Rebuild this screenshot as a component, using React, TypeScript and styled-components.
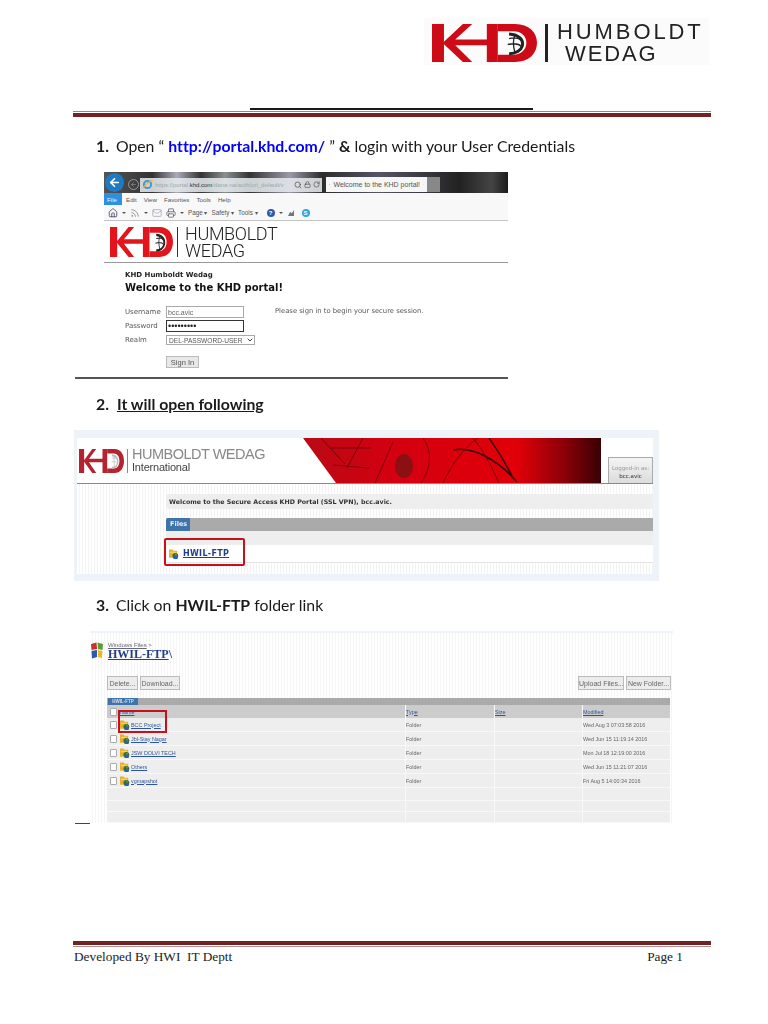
import { FC, ReactNode } from 'react';
import styled, { createGlobalStyle } from 'styled-components';
import { ArrowRight, ChevronDown, Home, Lock, Mail, Printer, RotateCw, Rss, Search, X } from 'lucide-react';

const GlobalStyle = createGlobalStyle`
  * {
    box-sizing: border-box;
  }

  body {
    margin: 0;
    background: #fff;
    color: #111;
    font-family: 'Lato', 'Liberation Sans', sans-serif;
    font-variant-ligatures: none;
  }
`;

interface IKhdMarkProps {
  width: number;
  height: number;
  color: string;
  inner?: string;
}

// KHD letter mark, stretched by each logo size
const KhdMark: FC<IKhdMarkProps> = ({ width, height, color, inner = '#222' }) => (
  <svg width={width} height={height} viewBox="0 0 316 115" preserveAspectRatio="none">
    <path
      fill={color}
      d="M0 0H36V115H0ZM36 54L93 0H121L70 47H165V0H198V115H165V64H70L121 115H93L36 61Z"
    />
    <path
      fill={color}
      d="M198 0H250C292 0 316 25 316 57C316 90 292 115 250 115H198V93H245C268 93 284 78 284 57C284 36 268 22 245 22H198Z"
    />
    <g fill="none" stroke={inner} strokeWidth="4">
      <path d="M232 30C262 32 276 48 272 66C268 80 252 90 232 90" strokeWidth="9" />
      <path d="M232 44C250 40 264 44 270 52M228 62C246 58 262 60 270 68M250 30C244 46 244 68 250 86" />
    </g>
  </svg>
);

const HeaderLogo = () => (
  <LogoPanel>
    <KhdMark width={105} height={38} color="#cc0b16" />
    <LogoDivider />
    <LogoName>
      <span>HUMBOLDT</span>
      <span>WEDAG</span>
    </LogoName>
  </LogoPanel>
);

const PortalLogo = () => (
  <PortalLogoRow>
    <KhdMark width={63} height={30} color="#e2141c" />
    <PortalLogoDivider />
    <PortalLogoName>
      <span>HUMBOLDT</span>
      <span>WEDAG</span>
    </PortalLogoName>
  </PortalLogoRow>
);

const FolderIcon = () => (
  <svg width="10" height="12" viewBox="0 0 11 12">
    <path fill="#e5b031" d="M0 1H4L5 2.5H9V10H0Z" />
    <path fill="#f6d266" d="M1 3.5H8V5H1Z" />
    <circle cx="7" cy="8" r="3.2" fill="#2f6f3c" />
    <path fill="#2b62b0" d="M5 8H9.5V11.5H5Z" />
    <path fill="#d9a024" d="M7 5.5L9 7.5H7Z" />
  </svg>
);

const WindowsIcon = () => (
  <svg width="14" height="18" viewBox="0 0 14 18">
    <path fill="#c8322b" d="M1 2L6.5 0.5L7 7L1.5 8Z" />
    <path fill="#5a9a3a" d="M7.5 0.5L13 2L12.5 8L8 7Z" />
    <path fill="#2d58a8" d="M1.5 9L7 8L7 15L2 16.5Z" />
    <path fill="#e8b62c" d="M8 8L12.5 9L12 16L8 15Z" />
  </svg>
);

const IeIcon = () => (
  <svg width="11" height="11" viewBox="0 0 11 11">
    <circle cx="5.5" cy="5.5" r="3.6" fill="none" stroke="#3d9ad8" strokeWidth="2" />
    <path d="M1 9C3 6 7 3 10.5 1" fill="none" stroke="#e8b62c" strokeWidth="1.2" />
  </svg>
);

const FeedIcon = () => (
  <svg width="8" height="8" viewBox="0 0 8 8">
    <path fill="#777" d="M1 7L3 3L5 4L7 1V7Z" />
  </svg>
);

const PortalShot = () => (
  <ShotOne>
    <TabBar>
      <BackButton>
        <ArrowRightFlipped />
      </BackButton>
      <ForwardButton>
        <ArrowRight size={7} strokeWidth={2} />
      </ForwardButton>
      <AddressBar>
        <IeIcon />
        <AddressText>
          https://portal.<b>khd.com</b>/dana-na/auth/url_default/v
        </AddressText>
        <Search size={8} />
        <Lock size={7} />
        <RotateCw size={7} />
      </AddressBar>
      <BrowserTab>
        <IeIcon />
        <span>Welcome to the KHD portal!</span>
        <X size={7} color="#999" />
      </BrowserTab>
      <NewTab />
    </TabBar>
    <MenuBar>
      <MenuItem $active>File</MenuItem>
      <MenuItem>Edit</MenuItem>
      <MenuItem>View</MenuItem>
      <MenuItem>Favorites</MenuItem>
      <MenuItem>Tools</MenuItem>
      <MenuItem>Help</MenuItem>
    </MenuBar>
    <ToolBar>
      <Home size={10} color="#446" />
      <Caret />
      <Rss size={10} color="#888" />
      <Caret />
      <Mail size={10} color="#aab" />
      <Printer size={10} color="#667" />
      <Caret />
      <ToolLabel>Page ▾</ToolLabel>
      <ToolLabel>Safety ▾</ToolLabel>
      <ToolLabel>Tools ▾</ToolLabel>
      <RoundIcon $color="#2c5aa8" $gap={5}>
        ?
      </RoundIcon>
      <Caret />
      <FeedIcon />
      <RoundIcon $color="#33a5e0" $gap={3}>
        S
      </RoundIcon>
    </ToolBar>
    <PortalLogo />
    <PortalBody>
      <PortalCompany>KHD Humboldt Wedag</PortalCompany>
      <PortalWelcome>Welcome to the KHD portal!</PortalWelcome>
      <PortalForm>
        <FormColumn>
          <FormRow>
            <FormLabel>Username</FormLabel>
            <TextField readOnly value="bcc.avic" />
          </FormRow>
          <FormRow>
            <FormLabel>Password</FormLabel>
            <TextField readOnly type="password" value="bccavic12" $focused />
          </FormRow>
          <FormRow>
            <FormLabel>Realm</FormLabel>
            <SelectWrap>
              <RealmSelect defaultValue="del">
                <option value="del">DEL-PASSWORD-USER</option>
              </RealmSelect>
              <SelectArrow />
            </SelectWrap>
          </FormRow>
          <SignIn>Sign In</SignIn>
        </FormColumn>
        <FormNote>Please sign in to begin your secure session.</FormNote>
      </PortalForm>
    </PortalBody>
  </ShotOne>
);

const WelcomeShot = () => (
  <ShotTwo>
    <ShotTwoInner>
      <IntlHeader>
        <IntlLogo>
          <KhdMark width={45} height={24} color="#b4232f" inner="#bbb" />
          <IntlDivider />
          <IntlName>
            <IntlTitle>HUMBOLDT WEDAG</IntlTitle>
            <IntlSub>International</IntlSub>
          </IntlName>
        </IntlLogo>
        <svg width="298" height="45" viewBox="0 0 298 45">
          <defs>
            <linearGradient id="bannerFade" x1="0" x2="1" y1="0" y2="0">
              <stop offset="0" stopColor="#b80a14" />
              <stop offset="0.3" stopColor="#d40010" />
              <stop offset="0.72" stopColor="#e00008" />
              <stop offset="0.88" stopColor="#8a0008" />
              <stop offset="1" stopColor="#380004" />
            </linearGradient>
          </defs>
          <path fill="url(#bannerFade)" d="M0 0H298V45H33Z" />
          <g fill="none" stroke="#7a0508" strokeWidth="1">
            <path d="M28 10L68 10M18 0L42 26M60 0L44 30M90 4L72 45M30 27L66 30" />
            <path d="M120 0C130 15 128 30 118 45M170 0C182 14 190 32 196 45M140 45C148 28 160 10 175 0" />
            <path d="M150 12C170 8 195 22 214 44M186 0C196 14 204 28 210 40" strokeWidth="1.6" stroke="#3a0306" />
          </g>
          <ellipse cx="101" cy="28" rx="9" ry="12" fill="#8a1014" />
        </svg>
        <LoggedTab>
          <span>Logged-in as:</span>
          <b>bcc.avic</b>
        </LoggedTab>
      </IntlHeader>
      <StripedArea>
        <WelcomeBar>Welcome to the Secure Access KHD Portal (SSL VPN), bcc.avic.</WelcomeBar>
        <FilesBar>
          <BlueTab>Files</BlueTab>
        </FilesBar>
        <FilesHead />
        <FilesRow>
          <FolderIcon />
          <FtpLink>HWIL-FTP</FtpLink>
          <FilesHighlight />
        </FilesRow>
      </StripedArea>
    </ShotTwoInner>
  </ShotTwo>
);

const files = [
  { name: 'BCC Project', modified: 'Wed Aug 3 07:03:58 2016' },
  { name: 'Jbl-Stay Nagar', modified: 'Wed Jun 15 11:19:14 2016' },
  { name: 'JSW DOLVI TECH', modified: 'Mon Jul 18 12:19:00 2016' },
  { name: 'Others', modified: 'Wed Jun 15 11:21:07 2016' },
  { name: 'vgmapshot', modified: 'Fri Aug 5 14:00:34 2016' },
];

const FilesShot = () => (
  <ShotThree>
    <Breadcrumbs>
      <WindowsIcon />
      <CrumbText>
        <CrumbParent>
          <u>Windows Files</u> &gt;
        </CrumbParent>
        <CrumbTitle>
          <u>HWIL-FTP</u>\
        </CrumbTitle>
      </CrumbText>
    </Breadcrumbs>
    <ActionRow>
      <ActionGroup>
        <ActionButton $width={31}>Delete...</ActionButton>
        <ActionButton $width={40}>Download...</ActionButton>
      </ActionGroup>
      <ActionGroup>
        <ActionButton $width={46}>Upload Files...</ActionButton>
        <ActionButton $width={45}>New Folder...</ActionButton>
      </ActionGroup>
    </ActionRow>
    <FileTable>
      <TableTabBar>
        <SmallBlueTab>HWIL-FTP</SmallBlueTab>
      </TableTabBar>
      <HeadRow>
        <NameCell>
          <CheckBox />
          <HeadLink>Name</HeadLink>
        </NameCell>
        <Cell>
          <HeadLink>Type</HeadLink>
        </Cell>
        <Cell>
          <HeadLink>Size</HeadLink>
        </Cell>
        <Cell>
          <HeadLink>Modified</HeadLink>
        </Cell>
      </HeadRow>
      {files.map((file, index) => (
        <FileRow key={file.name}>
          <NameCell>
            <CheckBox />
            <FolderIcon />
            <FileLink>{file.name}</FileLink>
            {index === 0 && <FileHighlight />}
          </NameCell>
          <Cell>Folder</Cell>
          <Cell />
          <Cell>{file.modified}</Cell>
        </FileRow>
      ))}
      {[13, 11, 11].map((height, index) => (
        <FileRow key={index} $height={height}>
          <NameCell />
          <Cell />
          <Cell />
          <Cell />
        </FileRow>
      ))}
    </FileTable>
  </ShotThree>
);

interface IStepProps {
  num: number;
  children: ReactNode;
}

const Step: FC<IStepProps> = ({ num, children }) => (
  <StepLine>
    <StepNum>{num}.</StepNum>
    <span>{children}</span>
  </StepLine>
);

const App = () => (
  <>
    <GlobalStyle />
    <Page>
      <HeaderLogo />
      <TitleRule />
      <TopRule />
      <Step num={1}>
        Open “ <PortalUrl>http://portal.khd.com/</PortalUrl> ” <b>&amp;</b> login with your User Credentials
      </Step>
      <PortalShot />
      <ShotRule />
      <Step num={2}>
        <StepTitle>It will open following</StepTitle>
      </Step>
      <WelcomeShot />
      <Step num={3}>
        Click on <b>HWIL-FTP</b> folder link
      </Step>
      <FilesShot />
      <StrayDash />
      <BottomRule />
      <Footer>
        <span>Developed By HWI&nbsp; IT Deptt</span>
        <span>Page 1</span>
      </Footer>
    </Page>
  </>
);

export default App;

const Page = styled.div`
  display: flex;
  flex-direction: column;
  width: 768px;
  height: 1024px;
  overflow: hidden;
  background: #fff;
`;

const LogoPanel = styled.div`
  display: flex;
  align-items: center;
  flex: none;
  margin: 18px 0 0 424px;
  padding: 5px 0 2px 8px;
  width: 285px;
  height: 47px;
  background: #fbfbfb;
  filter: blur(0.3px);
`;

const LogoDivider = styled.div`
  flex: none;
  margin: 0 9px 0 8px;
  width: 3px;
  height: 38px;
  background: #222;
`;

const LogoName = styled.div`
  display: flex;
  flex-direction: column;
  color: #222;
  font-family: 'Liberation Sans', sans-serif;
  font-size: 22px;
  line-height: 22px;
  letter-spacing: 2.9px;

  span:last-child {
    margin-left: 8px;
    letter-spacing: 1.9px;
  }
`;

const TitleRule = styled.div`
  flex: none;
  margin: 43px 0 0 250px;
  width: 283px;
  height: 2px;
  background: #1a1a1a;
`;

const TopRule = styled.div`
  flex: none;
  margin: 1px 0 0 73px;
  width: 638px;
  height: 6px;
  border-top: 1px solid #a87c7c;
  border-bottom: 4px solid #6f2323;
`;

const BottomRule = styled.div`
  flex: none;
  margin: 117px 0 0 73px;
  width: 638px;
  height: 6px;
  border-top: 4px solid #6f2323;
  border-bottom: 1px solid #b58f8f;
`;

const StepLine = styled.div`
  display: flex;
  flex: none;
  gap: 7px;
  margin: 19px 0 16px 96px;
  height: 20px;
  font-size: 15.8px;
  line-height: 20px;
  white-space: pre-wrap;
  color: #1a1a1a;
  filter: blur(0.2px);
`;

const StepNum = styled.b`
  font-weight: 700;
`;

const StepTitle = styled.b`
  margin-left: 1px;
  text-decoration: underline;
`;

const PortalUrl = styled.b`
  color: #0000ff;
`;

const ShotOne = styled.div`
  flex: none;
  margin-left: 104px;
  width: 404px;
  height: 205px;
  font-family: 'DejaVu Sans', sans-serif;
  filter: blur(0.45px);
`;

const ShotRule = styled.div`
  flex: none;
  margin: 0 0 -4px 75px;
  width: 433px;
  height: 2px;
  background: #555;
`;

const TabBar = styled.div`
  display: flex;
  align-items: center;
  height: 21px;
  padding: 4px 0 0 1px;
  background: linear-gradient(
    90deg,
    #555 0,
    #333 12%,
    #aab 18%,
    #333 24%,
    #8a8f90 30%,
    #333 36%,
    #99a 46%,
    #2c2c2c 54%,
    #556 68%,
    #222 88%,
    #444 96%,
    #1c1c1c 100%
  );
`;

const BackButton = styled.div`
  display: flex;
  align-items: center;
  justify-content: center;
  flex: none;
  margin-top: -4px;
  width: 19px;
  height: 19px;
  border-radius: 50%;
  background: #1f7ac4;
  color: #fff;
`;

const ArrowRightFlipped = styled(ArrowRight).attrs({ size: 13, strokeWidth: 3 })`
  transform: scaleX(-1);
`;

const ForwardButton = styled.div`
  display: flex;
  align-items: center;
  justify-content: center;
  flex: none;
  margin: 0 1px 0 4px;
  width: 11px;
  height: 11px;
  border: 1px solid #999;
  border-radius: 50%;
  color: #999;
  transform: scaleX(-1);
`;

const AddressBar = styled.div`
  display: flex;
  align-items: center;
  gap: 2px;
  flex: none;
  width: 182px;
  height: 14px;
  padding: 0 2px;
  background: rgba(232, 236, 240, 0.85);
  color: #444;
`;

const AddressText = styled.span`
  flex: 1;
  font-family: 'Liberation Sans', sans-serif;
  font-size: 6px;
  white-space: nowrap;
  color: #9aa;

  b {
    color: #333;
    font-weight: 400;
  }
`;

const BrowserTab = styled.div`
  display: flex;
  align-items: center;
  gap: 3px;
  flex: none;
  margin-left: 4px;
  width: 101px;
  height: 15px;
  padding: 0 3px;
  background: #f6f6f6;
  font-family: 'Liberation Sans', sans-serif;
  font-size: 7px;
  white-space: nowrap;
  color: #555;
`;

const NewTab = styled.div`
  flex: none;
  width: 13px;
  height: 15px;
  background: #888;
`;

const MenuBar = styled.div`
  display: flex;
  align-items: center;
  gap: 7px;
  height: 12px;
  background: #f8f8f8;
  font-family: 'Liberation Sans', sans-serif;
  font-size: 6.2px;
  color: #555;
`;

const MenuItem = styled.span<{ $active?: boolean }>`
  display: flex;
  align-items: center;
  height: 12px;
  padding: 0 ${({ $active }) => ($active ? '3px' : '0')};
  width: ${({ $active }) => ($active ? '18px' : 'auto')};
  margin-right: ${({ $active }) => ($active ? '-3px' : '0')};
  background: ${({ $active }) => ($active ? '#2f8fe0' : 'transparent')};
  color: ${({ $active }) => ($active ? '#dff' : 'inherit')};
`;

const ToolBar = styled.div`
  display: flex;
  align-items: center;
  gap: 4px;
  height: 16px;
  padding-left: 4px;
  background: #f8f8f8;
  border-bottom: 1px solid #c4c4c4;
  font-family: 'Liberation Sans', sans-serif;
  font-size: 6.3px;
  color: #555;
`;

const Caret = styled.span`
  width: 0;
  height: 0;
  border-top: 2px solid #555;
  border-left: 2px solid transparent;
  border-right: 2px solid transparent;
`;

const ToolLabel = styled.span`
  white-space: nowrap;
`;

const RoundIcon = styled.span<{ $color: string; $gap: number }>`
  display: flex;
  align-items: center;
  justify-content: center;
  margin-left: ${({ $gap }) => $gap}px;
  width: 8px;
  height: 8px;
  border-radius: 50%;
  background: ${({ $color }) => $color};
  color: #fff;
  font-size: 6px;
  font-weight: 700;
`;

const PortalLogoRow = styled.div`
  display: flex;
  align-items: center;
  height: 42px;
  padding-left: 6px;
  border-bottom: 1px solid #999;
`;

const PortalLogoDivider = styled.div`
  flex: none;
  margin: 0 7px 0 4px;
  width: 1px;
  height: 30px;
  background: #333;
`;

const PortalLogoName = styled.div`
  display: flex;
  flex-direction: column;
  color: #222;
  font-family: 'Roboto', 'Liberation Sans', sans-serif;
  font-size: 18px;
  font-weight: 300;
  line-height: 17px;
  letter-spacing: -0.35px;
`;

const PortalBody = styled.div`
  padding: 7px 0 0 21px;
`;

const PortalCompany = styled.div`
  font-size: 7px;
  font-weight: 700;
  line-height: 10px;
  color: #222;
`;

const PortalWelcome = styled.div`
  margin-top: 1px;
  font-size: 10px;
  font-weight: 700;
  line-height: 13px;
  color: #111;
`;

const PortalForm = styled.div`
  display: flex;
  margin-top: 12px;
`;

const FormColumn = styled.div`
  display: flex;
  flex-direction: column;
  gap: 2px;
  width: 150px;
`;

const FormRow = styled.div`
  display: flex;
  align-items: center;
  height: 12px;
`;

const FormLabel = styled.span`
  flex: none;
  width: 41px;
  font-size: 7px;
  color: #555;
`;

const TextField = styled.input<{ $focused?: boolean }>`
  width: 78px;
  height: 12px;
  padding: 0 1px;
  border: 1px solid ${({ $focused }) => ($focused ? '#333' : '#aaa')};
  background: #fff;
  font-family: 'Liberation Sans', sans-serif;
  font-size: ${({ $focused }) => ($focused ? '9px' : '7px')};
  color: ${({ $focused }) => ($focused ? '#222' : '#666')};
  outline: none;
`;

const SelectWrap = styled.div`
  position: relative;
  width: 89px;
  height: 10px;
`;

const RealmSelect = styled.select`
  display: block;
  width: 100%;
  height: 100%;
  padding: 0 0 0 2px;
  border: 1px solid #aaa;
  border-radius: 0;
  background: #fff;
  font-family: 'Liberation Sans', sans-serif;
  font-size: 6.6px;
  color: #555;
  appearance: none;
`;

const SelectArrow = styled(ChevronDown).attrs({ size: 8, strokeWidth: 3 })`
  position: absolute;
  top: 1px;
  right: 1px;
  color: #444;
`;

const SignIn = styled.button`
  margin: 8px 0 0 41px;
  width: 33px;
  height: 12px;
  padding: 0;
  border: 1px solid #bbb;
  background: #e8e8e8;
  font-family: 'Liberation Sans', sans-serif;
  font-size: 7.5px;
  color: #555;
`;

const FormNote = styled.div`
  flex: none;
  font-size: 6.8px;
  font-weight: 500;
  line-height: 11px;
  color: #555;
`;

const ShotTwo = styled.div`
  flex: none;
  margin: 0 0 -5px 74px;
  width: 585px;
  height: 151px;
  padding: 8px 6px 7px 3px;
  background: #eef3fa;
  font-family: 'DejaVu Sans', sans-serif;
  filter: blur(0.5px);
`;

const ShotTwoInner = styled.div`
  height: 136px;
  background: #fff;
`;

const IntlHeader = styled.div`
  display: flex;
  height: 46px;
  border-bottom: 1px solid #888;
`;

const IntlLogo = styled.div`
  display: flex;
  align-items: center;
  flex: none;
  width: 226px;
  height: 45px;
  padding-left: 2px;
`;

const IntlDivider = styled.div`
  flex: none;
  margin: 0 4px 0 3px;
  width: 1px;
  height: 24px;
  background: #888;
`;

const IntlName = styled.div`
  display: flex;
  flex-direction: column;
  font-family: 'Liberation Sans', sans-serif;
`;

const IntlTitle = styled.span`
  font-size: 14.5px;
  line-height: 14px;
  letter-spacing: -0.5px;
  color: #888;
  white-space: nowrap;
`;

const IntlSub = styled.span`
  font-size: 11px;
  line-height: 13px;
  letter-spacing: -0.2px;
  color: #444;
`;

const LoggedTab = styled.div`
  display: flex;
  flex-direction: column;
  align-items: center;
  flex: none;
  align-self: flex-end;
  margin-left: 7px;
  width: 45px;
  height: 26px;
  padding-top: 6px;
  border: 1px solid #aaa;
  border-bottom: 0;
  background: linear-gradient(#f4f4f4, #dcdcdc);
  font-size: 5.5px;
  line-height: 8px;
  white-space: nowrap;
  color: #999;

  b {
    font-weight: 400;
    color: #333;
  }
`;

const StripedArea = styled.div`
  display: flex;
  flex-direction: column;
  align-items: stretch;
  height: 90px;
  padding: 10px 0 0 89px;
  background: repeating-linear-gradient(90deg, #fff 0 2px, #f4f4f4 2px 3px);
`;

const WelcomeBar = styled.div`
  height: 15px;
  padding-left: 3px;
  background: #eee;
  border-radius: 3px 0 0 3px;
  font-size: 6.3px;
  font-weight: 700;
  line-height: 15px;
  white-space: nowrap;
  color: #333;
`;

const FilesBar = styled.div`
  margin-top: 9px;
  height: 13px;
  background: #aaa;
`;

const BlueTab = styled.div`
  width: 24px;
  height: 13px;
  padding-left: 4px;
  background: #3f74a8;
  border-radius: 3px 0 0 0;
  font-size: 6.5px;
  font-weight: 700;
  line-height: 13px;
  color: #e8eef5;
`;

const FilesHead = styled.div`
  height: 14px;
  background: #eee;
`;

const FilesRow = styled.div`
  position: relative;
  display: flex;
  align-items: center;
  gap: 4px;
  height: 18px;
  padding-left: 3px;
  background: #fff;
  border-bottom: 1px solid #e4e4e4;
`;

const FtpLink = styled.span`
  font-size: 8px;
  font-weight: 700;
  letter-spacing: 0.3px;
  text-decoration: underline;
  color: #1f3f8a;
`;

const FilesHighlight = styled.div`
  position: absolute;
  top: -7px;
  left: -2px;
  width: 81px;
  height: 28px;
  border: 2px solid #c8101c;
  border-radius: 2px;
`;

const ShotThree = styled.div`
  flex: none;
  display: flex;
  flex-direction: column;
  margin: 0 0 0 90px;
  width: 583px;
  height: 192px;
  border-top: 2px solid #eef3fa;
  background: repeating-linear-gradient(90deg, #fff 0 2px, #f5f5f5 2px 3px);
  font-family: 'Liberation Sans', sans-serif;
  filter: blur(0.5px);
`;

const Breadcrumbs = styled.div`
  display: flex;
  gap: 4px;
  height: 27px;
  padding-top: 9px;
`;

const CrumbText = styled.div`
  display: flex;
  flex-direction: column;
`;

const CrumbParent = styled.span`
  font-size: 6px;
  line-height: 7px;
  color: #667;
`;

const CrumbTitle = styled.span`
  font-family: 'Liberation Serif', serif;
  font-size: 12px;
  font-weight: 700;
  line-height: 11px;
  color: #1f3f8a;
`;

const ActionRow = styled.div`
  display: flex;
  justify-content: space-between;
  margin-top: 16px;
  padding: 0 2px 0 17px;
`;

const ActionGroup = styled.div`
  display: flex;
  gap: 2px;
`;

const ActionButton = styled.button<{ $width: number }>`
  width: ${({ $width }) => $width}px;
  height: 14px;
  padding: 0;
  border: 1px solid #bbb;
  background: #ececec;
  font-family: 'Liberation Sans', sans-serif;
  font-size: 7px;
  white-space: nowrap;
  color: #666;
`;

const FileTable = styled.div`
  margin: 8px 3px 0 17px;
`;

const TableTabBar = styled.div`
  height: 7px;
  background: #aaa;
`;

const SmallBlueTab = styled.div`
  margin-left: 1px;
  width: 30px;
  height: 7px;
  background: #3f74a8;
  font-size: 4.5px;
  font-weight: 700;
  line-height: 7px;
  text-align: center;
  color: #dde;
`;

const FileRow = styled.div<{ $height?: number }>`
  display: grid;
  grid-template-columns: 298px 89px 88px 1fr;
  align-items: center;
  height: ${({ $height }) => $height ?? 14}px;
  background: #eee;
  border-bottom: 1px solid #f8f8f8;
  font-size: 5.4px;
  color: #666;
`;

const HeadRow = styled(FileRow)`
  height: 13px;
  background: #ccc;
  border-bottom: 0;
`;

const Cell = styled.div`
  display: flex;
  align-items: center;
  height: 100%;
  padding-left: 0;
  border-left: 1px solid #f8f8f8;
  white-space: nowrap;
`;

const NameCell = styled.div`
  position: relative;
  display: flex;
  align-items: center;
  gap: 3px;
  height: 100%;
  padding-left: 3px;
`;

const CheckBox = styled.span`
  flex: none;
  width: 7px;
  height: 8px;
  background: #fff;
  border: 1px solid #aaa;
  border-radius: 1px;
`;

const HeadLink = styled.span`
  text-decoration: underline;
  color: #2f55a0;
`;

const FileLink = styled.span`
  margin-left: -2px;
  font-size: 5.4px;
  text-decoration: underline;
  color: #2f55a0;
`;

const FileHighlight = styled.div`
  position: absolute;
  top: -8px;
  left: 11px;
  width: 49px;
  height: 23px;
  border: 2px solid #c8101c;
`;

const StrayDash = styled.div`
  flex: none;
  margin-left: 75px;
  width: 15px;
  height: 1px;
  background: #444;
`;

const Footer = styled.footer`
  display: flex;
  justify-content: space-between;
  margin: 2px 85px 0 74px;
  font-family: 'Liberation Serif', serif;
  font-size: 13.3px;
  line-height: 16px;
  color: #222;
`;
